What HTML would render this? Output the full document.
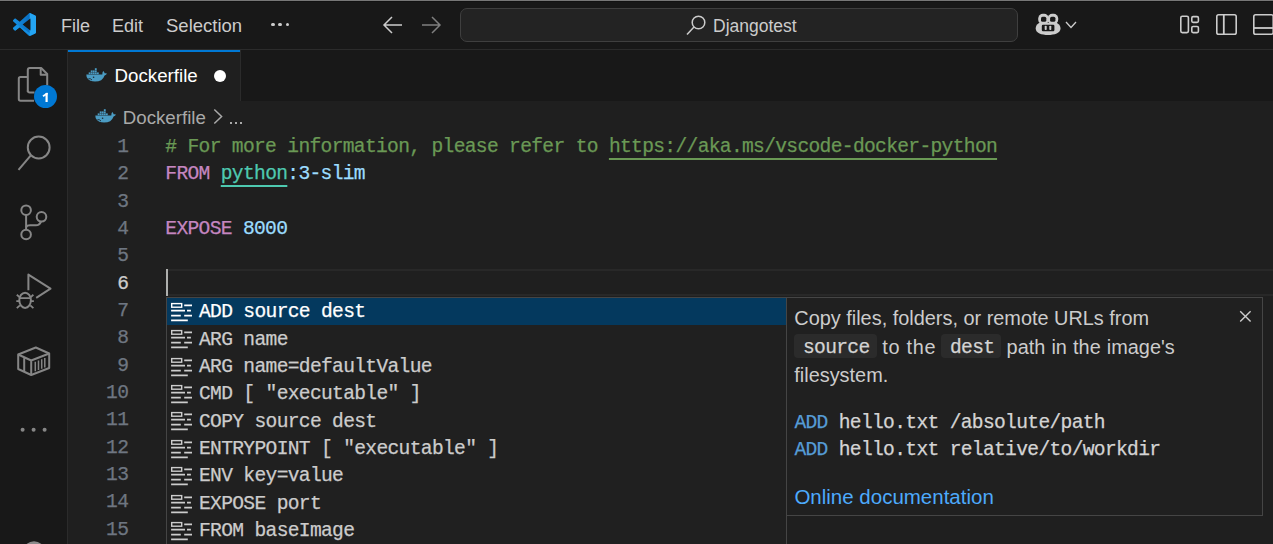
<!DOCTYPE html>
<html><head><meta charset="utf-8">
<style>
*{margin:0;padding:0;box-sizing:border-box}
html,body{width:1273px;height:544px;overflow:hidden;background:#181818}
body{position:relative;font-family:"Liberation Sans",sans-serif;color:#cccccc}
.a{position:absolute}
.t{position:absolute;white-space:pre;line-height:1}
.m{font-family:"Liberation Mono",monospace;letter-spacing:-0.668px;-webkit-text-stroke:0.25px currentColor}
svg{position:absolute;overflow:visible}
</style></head><body>
<!-- top window edge -->
<div class="a" style="left:0;top:0;width:1273px;height:1px;background:#777"></div>
<div class="a" style="left:0;top:1px;width:1273px;height:1px;background:#121212"></div>
<!-- title bar border -->
<div class="a" style="left:0;top:49px;width:1273px;height:1px;background:#2b2b2b"></div>

<!-- vscode logo -->
<svg style="left:13px;top:12.8px" width="23" height="23" viewBox="0 0 100 100">
 <defs>
  <clipPath id="vc"><path d="M96.46 10.8L75.86.9C73.48-.25 70.62.24 68.75 2.1L29.3 38.1 12.12 25.06c-1.6-1.21-3.83-1.11-5.32.24L1.3 30.3c-1.81 1.65-1.81 4.5 0 6.15L16.2 50 1.3 63.55c-1.81 1.65-1.81 4.5 0 6.15l5.5 5c1.490 1.35 3.72 1.45 5.32.24l17.18-13.04 39.45 36c1.87 1.86 4.73 2.35 7.110 1.2l20.6-9.9c2.17-1.04 3.54-3.230 3.54-5.64V16.44c0-2.41-1.37-4.6-3.54-5.64zM75.03 72.7L45.1 50l29.93-22.7v45.4z"/></clipPath>
  <linearGradient id="vg" x1="0" y1="0" x2="1" y2="0"><stop offset="0" stop-color="#168fe2"/><stop offset="0.72" stop-color="#0a6fc2"/></linearGradient>
 </defs>
 <g clip-path="url(#vc)">
  <rect x="0" y="0" width="100" height="100" fill="url(#vg)"/>
  <path d="M0 68 L18 50 L74 100 L0 100 Z" fill="#1693e5"/>
  <path d="M18 50 L74 100 L74 88 Z" fill="#1590e2"/>
  <rect x="72.5" y="0" width="28" height="100" fill="#24a5f3"/>
 </g>
 <path d="M42 50 L75.5 24 V76 Z" fill="#181818"/>
</svg>

<div class="t" style="left:61px;top:17px;font-size:18px">File</div>
<div class="t" style="left:112px;top:17px;font-size:18px">Edit</div>
<div class="t" style="left:166px;top:16.6px;font-size:18.5px">Selection</div>
<!-- more dots -->
<div class="a" style="left:271.1px;top:22.5px;width:3.9px;height:3.9px;border-radius:50%;background:#ccc"></div>
<div class="a" style="left:278.35px;top:22.5px;width:3.9px;height:3.9px;border-radius:50%;background:#ccc"></div>
<div class="a" style="left:285.6px;top:22.5px;width:3.9px;height:3.9px;border-radius:50%;background:#ccc"></div>

<!-- nav arrows -->
<svg style="left:383px;top:16px" width="20" height="18" viewBox="0 0 20 18">
 <path d="M1 9 H19 M9 1 L1 9 L9 17" stroke="#cccccc" stroke-width="1.5" fill="none"/>
</svg>
<svg style="left:421px;top:16px" width="20" height="18" viewBox="0 0 20 18">
 <path d="M1 9 H19 M11 1 L19 9 L11 17" stroke="#7f7f7f" stroke-width="1.5" fill="none"/>
</svg>

<!-- command center -->
<div class="a" style="left:460px;top:8px;width:558px;height:34px;border:1px solid #3f3f3f;border-radius:7px;background:#232323"></div>
<svg style="left:686px;top:15px" width="20" height="20" viewBox="0 0 20 20">
 <circle cx="12.5" cy="7.5" r="6.3" stroke="#cccccc" stroke-width="1.5" fill="none"/>
 <path d="M8 12 L1 19.5" stroke="#cccccc" stroke-width="1.5"/>
</svg>
<div class="t" style="left:713px;top:18px;font-size:17.5px">Djangotest</div>

<!-- copilot -->
<svg style="left:1035px;top:13px" width="26" height="23" viewBox="0 0 26 23">
 <path d="M4 10 C1.5 11.5 0.7 13.5 0.7 15.5 C0.7 20 6.5 22 13 22 C19.5 22 25.5 20 25.5 15.5 C25.5 13.5 24.6 11.5 22 10 Z" fill="#cccccc"/>
 <rect x="3.2" y="0.8" width="10.6" height="10.6" rx="4.6" fill="#cccccc"/>
 <rect x="12.6" y="0.8" width="10.6" height="10.6" rx="4.6" fill="#cccccc"/>
 <rect x="6" y="3.7" width="5.3" height="5.1" rx="1.6" fill="#181818"/>
 <rect x="15.1" y="3.7" width="5.3" height="5.1" rx="1.6" fill="#181818"/>
 <rect x="6.8" y="11.8" width="12.6" height="6.4" rx="1.2" fill="#181818"/>
 <rect x="9.7" y="12.7" width="2" height="4.3" rx="0.8" fill="#cccccc"/>
 <rect x="14.3" y="12.7" width="2" height="4.3" rx="0.8" fill="#cccccc"/>
</svg>
<svg style="left:1065px;top:21px" width="12" height="8" viewBox="0 0 12 8">
 <path d="M1 1 L6 6.5 L11 1" stroke="#cccccc" stroke-width="1.3" fill="none"/>
</svg>

<!-- layout icons -->
<svg style="left:1179px;top:15px" width="21" height="19" viewBox="0 0 21 19">
 <rect x="1.8" y="1.3" width="7.6" height="16.3" rx="1.5" stroke="#cccccc" stroke-width="1.6" fill="none"/>
 <rect x="12.8" y="1.6" width="6.6" height="5.8" rx="1.3" stroke="#cccccc" stroke-width="1.6" fill="none"/>
 <rect x="12.8" y="11.5" width="6.6" height="6.1" rx="1.3" stroke="#cccccc" stroke-width="1.6" fill="none"/>
</svg>
<svg style="left:1215px;top:13px" width="23" height="23" viewBox="0 0 23 23">
 <rect x="1.8" y="1.8" width="19.4" height="19.4" rx="1.8" stroke="#cccccc" stroke-width="1.6" fill="none"/>
 <path d="M8.8 2 V21" stroke="#cccccc" stroke-width="1.8"/>
</svg>
<svg style="left:1252px;top:13px" width="23" height="23" viewBox="0 0 23 23">
 <rect x="1.8" y="1.8" width="19.4" height="19.4" rx="1.8" stroke="#cccccc" stroke-width="1.6" fill="none"/>
 <path d="M2 15 H21" stroke="#cccccc" stroke-width="1.8"/>
</svg>

<!-- activity bar -->
<div class="a" style="left:67px;top:50px;width:1px;height:494px;background:#2b2b2b"></div>


<!-- activity icons -->
<svg style="left:0;top:50px" width="67" height="494" viewBox="0 50 67 494">
 <g stroke="#868686" stroke-width="2" fill="none" stroke-linejoin="round">
  <!-- explorer -->
  <path d="M27.8 77 H20.5 Q18.8 77 18.8 78.7 V99 Q18.8 100.7 20.5 100.7 H34"/>
  <path d="M27.8 92 V70 Q27.8 68 29.8 68 H41.2 L47.2 74 V85.5"/>
  <path d="M40.7 68.5 V74.8 H47"/>
  <path d="M27.8 90.5 Q27.8 92.4 29.8 92.4 H34.5"/>
  <!-- search -->
  <circle cx="38.7" cy="147.5" r="10.9"/>
  <path d="M30.6 155.6 L18.5 169.8"/>
  <!-- source control -->
  <circle cx="26.1" cy="210.2" r="4.8"/>
  <circle cx="41.5" cy="216.8" r="4.8"/>
  <circle cx="26.1" cy="234.5" r="4.8"/>
  <path d="M26.1 215 V229.7"/>
  <path d="M26.1 227 Q27 225.3 30 225.3 H36 Q39.5 225.3 41 221.6"/>
  <!-- run and debug -->
  <path d="M28.4 290.3 V274.6 L50.5 288.7 L36.2 297.8"/>
  <ellipse cx="25.1" cy="300.3" rx="5.8" ry="7.6"/>
  <path d="M19.6 298.2 H30.6 M16.8 294.8 L19.8 297.4 M33.4 294.8 L30.4 297.4 M16.3 301.2 H19.3 M30.9 301.2 H33.9 M16.8 308.2 L19.9 305.4 M33.4 308.2 L30.3 305.4" stroke-width="1.8"/>
  <!-- containers -->
  <path d="M18.2 354.5 L35.8 347.5 L49.2 353.5 V368 L31.2 375 L18.2 369 Z"/>
  <path d="M18.2 354.5 L31.2 360.5 L49.2 353.5 M31.2 360.5 V375 M24.2 357.3 V371.8"/>
  <path d="M35.3 361.8 V371.3 M38.5 360.5 V370 M41.7 359.2 V368.7 M44.8 357.9 V367.4" stroke-width="1.5"/>
 </g>
 <g fill="#868686">
  <circle cx="22.6" cy="429.8" r="2"/><circle cx="33.6" cy="429.8" r="2"/><circle cx="44.6" cy="429.8" r="2"/>
 </g>
 <ellipse cx="34" cy="550" rx="10" ry="8.8" fill="#8a8a8a"/>
</svg>
<!-- badge -->
<div class="a" style="left:34px;top:84.8px;width:23.2px;height:23.2px;border-radius:50%;background:#0078d4"></div>
<svg style="left:34px;top:84px" width="24" height="24" viewBox="0 0 24 24"><path d="M12.6 9 V18" stroke="#fff" stroke-width="2.2"/><path d="M13.6 9.2 L9 12.3" stroke="#fff" stroke-width="1.8"/></svg>

<!-- tabs bar -->
<div class="a" style="left:68px;top:50px;width:172px;height:51px;background:#1f1f1f"></div>
<div class="a" style="left:68px;top:50px;width:172px;height:2px;background:#0078d4"></div>
<div class="a" style="left:240px;top:50px;width:1px;height:51px;background:#2b2b2b"></div>

<!-- editor area -->
<div class="a" style="left:68px;top:101px;width:1205px;height:443px;background:#1f1f1f"></div>


<!-- tab content -->
<svg style="left:86.2px;top:68px" width="22" height="14" viewBox="0 0 22 14"><g fill="#4b9cc3">
 <path d="M0.3 6.4 H16.3 Q16.3 4.5 17.2 3.1 Q18.4 4 18.6 5.2 Q20 5 21 5.6 Q20.2 7.2 18.6 7.4 Q16.5 13.6 9 13.6 Q3.5 13.6 1.6 10.6 Q0.3 8.8 0.3 6.4 Z"/>
 <rect x="2.7" y="4.4" width="1.85" height="1.8"/><rect x="4.75" y="4.4" width="1.85" height="1.8"/><rect x="6.8" y="4.4" width="1.85" height="1.8"/><rect x="8.85" y="4.4" width="1.85" height="1.8"/><rect x="10.9" y="4.4" width="1.85" height="1.8"/>
 <rect x="4.75" y="2.4" width="1.85" height="1.8"/><rect x="6.8" y="2.4" width="1.85" height="1.8"/><rect x="8.85" y="2.4" width="1.85" height="1.8"/>
 <rect x="8.85" y="0.2" width="1.85" height="1.9"/>
</g>
<circle cx="7.6" cy="9.2" r="0.8" fill="#1f2a33"/>
<path d="M2.5 10.6 Q4.8 10.4 6 12" stroke="#1f2a33" stroke-width="0.9" fill="none"/></svg>
<div class="t" style="left:114.6px;top:66.6px;font-size:18.7px;color:#ffffff">Dockerfile</div>
<div class="a" style="left:214px;top:69.6px;width:12.2px;height:12.2px;border-radius:50%;background:#ffffff"></div>

<!-- breadcrumbs -->
<svg style="left:95px;top:109.4px" width="22" height="14" viewBox="0 0 22 14"><g fill="#4b9cc3">
 <path d="M0.3 6.4 H16.3 Q16.3 4.5 17.2 3.1 Q18.4 4 18.6 5.2 Q20 5 21 5.6 Q20.2 7.2 18.6 7.4 Q16.5 13.6 9 13.6 Q3.5 13.6 1.6 10.6 Q0.3 8.8 0.3 6.4 Z"/>
 <rect x="2.7" y="4.4" width="1.85" height="1.8"/><rect x="4.75" y="4.4" width="1.85" height="1.8"/><rect x="6.8" y="4.4" width="1.85" height="1.8"/><rect x="8.85" y="4.4" width="1.85" height="1.8"/><rect x="10.9" y="4.4" width="1.85" height="1.8"/>
 <rect x="4.75" y="2.4" width="1.85" height="1.8"/><rect x="6.8" y="2.4" width="1.85" height="1.8"/><rect x="8.85" y="2.4" width="1.85" height="1.8"/>
 <rect x="8.85" y="0.2" width="1.85" height="1.9"/>
</g>
<circle cx="7.6" cy="9.2" r="0.8" fill="#1f2a33"/>
<path d="M2.5 10.6 Q4.8 10.4 6 12" stroke="#1f2a33" stroke-width="0.9" fill="none"/></svg>
<div class="t" style="left:122.8px;top:109.2px;font-size:18.7px;color:#a9a9a9">Dockerfile</div>
<svg style="left:213px;top:108px" width="10" height="17" viewBox="0 0 10 17"><path d="M1.3 1.5 L8.6 8.5 L1.3 15.5" stroke="#a9a9a9" stroke-width="1.5" fill="none"/></svg>
<div class="a" style="left:230px;top:122px;width:2.2px;height:2.2px;background:#a9a9a9"></div>
<div class="a" style="left:235px;top:122px;width:2.2px;height:2.2px;background:#a9a9a9"></div>
<div class="a" style="left:240px;top:122px;width:2.2px;height:2.2px;background:#a9a9a9"></div>


<!-- editor -->
<div class="a" style="left:166px;top:268.70px;width:1107px;height:27.3px;border-top:2px solid #282828;border-bottom:2px solid #282828"></div>
<div class="a" style="left:166px;top:268.50px;width:2px;height:27.4px;background:#aeafad"></div>
<div class="t m" style="left:68px;width:60.3px;text-align:right;top:137.79px;font-size:19.6px;color:#6e7681">1</div>
<div class="t m" style="left:68px;width:60.3px;text-align:right;top:165.15px;font-size:19.6px;color:#6e7681">2</div>
<div class="t m" style="left:68px;width:60.3px;text-align:right;top:192.51px;font-size:19.6px;color:#6e7681">3</div>
<div class="t m" style="left:68px;width:60.3px;text-align:right;top:219.87px;font-size:19.6px;color:#6e7681">4</div>
<div class="t m" style="left:68px;width:60.3px;text-align:right;top:247.23px;font-size:19.6px;color:#6e7681">5</div>
<div class="t m" style="left:68px;width:60.3px;text-align:right;top:274.59px;font-size:19.6px;color:#cccccc">6</div>
<div class="t m" style="left:68px;width:60.3px;text-align:right;top:301.95px;font-size:19.6px;color:#6e7681">7</div>
<div class="t m" style="left:68px;width:60.3px;text-align:right;top:329.31px;font-size:19.6px;color:#6e7681">8</div>
<div class="t m" style="left:68px;width:60.3px;text-align:right;top:356.67px;font-size:19.6px;color:#6e7681">9</div>
<div class="t m" style="left:68px;width:60.3px;text-align:right;top:384.03px;font-size:19.6px;color:#6e7681">10</div>
<div class="t m" style="left:68px;width:60.3px;text-align:right;top:411.39px;font-size:19.6px;color:#6e7681">11</div>
<div class="t m" style="left:68px;width:60.3px;text-align:right;top:438.75px;font-size:19.6px;color:#6e7681">12</div>
<div class="t m" style="left:68px;width:60.3px;text-align:right;top:466.11px;font-size:19.6px;color:#6e7681">13</div>
<div class="t m" style="left:68px;width:60.3px;text-align:right;top:493.47px;font-size:19.6px;color:#6e7681">14</div>
<div class="t m" style="left:68px;width:60.3px;text-align:right;top:520.83px;font-size:19.6px;color:#6e7681">15</div>
<div class="t m" style="left:165.3px;top:137.79px;font-size:19.6px"><span style="color:#6a9955"># For more information, please refer to <span style="text-decoration:underline;text-underline-offset:6px;text-decoration-thickness:2px">https://aka.ms/vscode-docker-python</span></span></div>
<div class="t m" style="left:165.3px;top:165.15px;font-size:19.6px"><span style="color:#c586c0">FROM</span> <span style="color:#4ec9b0;text-decoration:underline;text-underline-offset:6px;text-decoration-thickness:2px">python</span><span style="color:#9cdcfe">:3-slim</span></div>
<div class="t m" style="left:165.3px;top:219.87px;font-size:19.6px"><span style="color:#c586c0">EXPOSE</span> <span style="color:#9cdcfe">8000</span></div>

<!-- suggest -->
<div class="a" style="left:166px;top:297px;width:621px;height:260px;border:1px solid #454545;background:#202020"></div>
<div class="a" style="left:167px;top:298px;width:619px;height:27px;background:#04395e"></div>
<svg style="left:168px;top:298.00px" width="30" height="27" viewBox="0 0 30 27"><g fill="none" stroke="#ffffff" stroke-width="1.4"><rect x="3.7" y="5.6" width="10" height="3.6"/></g><g stroke="#ffffff" stroke-width="1.7"><path d="M16.2 7.3 H24 M3.1 12.6 H17 M19 12.6 H22.9 M3.1 17.6 H12.8 M16.2 17.6 H24 M3.1 22.4 H19.8"/></g></svg>
<div class="t m" style="left:199px;top:303.19px;font-size:19.6px;color:#ffffff">ADD source dest</div>
<svg style="left:168px;top:325.36px" width="30" height="27" viewBox="0 0 30 27"><g fill="none" stroke="#cccccc" stroke-width="1.4"><rect x="3.7" y="5.6" width="10" height="3.6"/></g><g stroke="#cccccc" stroke-width="1.7"><path d="M16.2 7.3 H24 M3.1 12.6 H17 M19 12.6 H22.9 M3.1 17.6 H12.8 M16.2 17.6 H24 M3.1 22.4 H19.8"/></g></svg>
<div class="t m" style="left:199px;top:330.55px;font-size:19.6px;color:#cccccc">ARG name</div>
<svg style="left:168px;top:352.72px" width="30" height="27" viewBox="0 0 30 27"><g fill="none" stroke="#cccccc" stroke-width="1.4"><rect x="3.7" y="5.6" width="10" height="3.6"/></g><g stroke="#cccccc" stroke-width="1.7"><path d="M16.2 7.3 H24 M3.1 12.6 H17 M19 12.6 H22.9 M3.1 17.6 H12.8 M16.2 17.6 H24 M3.1 22.4 H19.8"/></g></svg>
<div class="t m" style="left:199px;top:357.91px;font-size:19.6px;color:#cccccc">ARG name=defaultValue</div>
<svg style="left:168px;top:380.08px" width="30" height="27" viewBox="0 0 30 27"><g fill="none" stroke="#cccccc" stroke-width="1.4"><rect x="3.7" y="5.6" width="10" height="3.6"/></g><g stroke="#cccccc" stroke-width="1.7"><path d="M16.2 7.3 H24 M3.1 12.6 H17 M19 12.6 H22.9 M3.1 17.6 H12.8 M16.2 17.6 H24 M3.1 22.4 H19.8"/></g></svg>
<div class="t m" style="left:199px;top:385.27px;font-size:19.6px;color:#cccccc">CMD [ "executable" ]</div>
<svg style="left:168px;top:407.44px" width="30" height="27" viewBox="0 0 30 27"><g fill="none" stroke="#cccccc" stroke-width="1.4"><rect x="3.7" y="5.6" width="10" height="3.6"/></g><g stroke="#cccccc" stroke-width="1.7"><path d="M16.2 7.3 H24 M3.1 12.6 H17 M19 12.6 H22.9 M3.1 17.6 H12.8 M16.2 17.6 H24 M3.1 22.4 H19.8"/></g></svg>
<div class="t m" style="left:199px;top:412.63px;font-size:19.6px;color:#cccccc">COPY source dest</div>
<svg style="left:168px;top:434.80px" width="30" height="27" viewBox="0 0 30 27"><g fill="none" stroke="#cccccc" stroke-width="1.4"><rect x="3.7" y="5.6" width="10" height="3.6"/></g><g stroke="#cccccc" stroke-width="1.7"><path d="M16.2 7.3 H24 M3.1 12.6 H17 M19 12.6 H22.9 M3.1 17.6 H12.8 M16.2 17.6 H24 M3.1 22.4 H19.8"/></g></svg>
<div class="t m" style="left:199px;top:439.99px;font-size:19.6px;color:#cccccc">ENTRYPOINT [ "executable" ]</div>
<svg style="left:168px;top:462.16px" width="30" height="27" viewBox="0 0 30 27"><g fill="none" stroke="#cccccc" stroke-width="1.4"><rect x="3.7" y="5.6" width="10" height="3.6"/></g><g stroke="#cccccc" stroke-width="1.7"><path d="M16.2 7.3 H24 M3.1 12.6 H17 M19 12.6 H22.9 M3.1 17.6 H12.8 M16.2 17.6 H24 M3.1 22.4 H19.8"/></g></svg>
<div class="t m" style="left:199px;top:467.35px;font-size:19.6px;color:#cccccc">ENV key=value</div>
<svg style="left:168px;top:489.52px" width="30" height="27" viewBox="0 0 30 27"><g fill="none" stroke="#cccccc" stroke-width="1.4"><rect x="3.7" y="5.6" width="10" height="3.6"/></g><g stroke="#cccccc" stroke-width="1.7"><path d="M16.2 7.3 H24 M3.1 12.6 H17 M19 12.6 H22.9 M3.1 17.6 H12.8 M16.2 17.6 H24 M3.1 22.4 H19.8"/></g></svg>
<div class="t m" style="left:199px;top:494.71px;font-size:19.6px;color:#cccccc">EXPOSE port</div>
<svg style="left:168px;top:516.88px" width="30" height="27" viewBox="0 0 30 27"><g fill="none" stroke="#cccccc" stroke-width="1.4"><rect x="3.7" y="5.6" width="10" height="3.6"/></g><g stroke="#cccccc" stroke-width="1.7"><path d="M16.2 7.3 H24 M3.1 12.6 H17 M19 12.6 H22.9 M3.1 17.6 H12.8 M16.2 17.6 H24 M3.1 22.4 H19.8"/></g></svg>
<div class="t m" style="left:199px;top:522.07px;font-size:19.6px;color:#cccccc">FROM baseImage</div>
<div class="a" style="left:786px;top:297px;width:477px;height:219px;border:1px solid #454545;background:#202020"></div>
<svg style="left:1239px;top:310px" width="13" height="13" viewBox="0 0 13 13"><path d="M1.2 1.2 L11.6 11.6 M11.6 1.2 L1.2 11.6" stroke="#cccccc" stroke-width="1.4"/></svg>
<div class="t" style="left:794.3px;top:308.5px;font-size:19.9px">Copy files, folders, or remote URLs from</div>
<div class="a" style="left:794.3px;top:334px;width:82.7px;height:24px;border-radius:4px;background:#2b2b2b"></div>
<div class="a" style="left:941.4px;top:334px;width:59.3px;height:24px;border-radius:4px;background:#2b2b2b"></div>
<div class="t m" style="left:803px;top:339.3px;font-size:19.6px;color:#d4d4d4">source</div>
<div class="t" style="left:882.3px;top:337.6px;font-size:19.9px;letter-spacing:0.7px">to the</div>
<div class="t m" style="left:950px;top:339.3px;font-size:19.6px;color:#d4d4d4">dest</div>
<div class="t" style="left:1006.6px;top:337.6px;font-size:19.9px;word-spacing:0.6px">path in the image's</div>
<div class="t" style="left:794.3px;top:365.9px;font-size:19.9px">filesystem.</div>
<div class="t m" style="left:794.4px;top:413.99px;font-size:19.6px;color:#d4d4d4"><span style="color:#569cd6">ADD</span> hello.txt /absolute/path</div>
<div class="t m" style="left:794.4px;top:440.99px;font-size:19.6px;color:#d4d4d4"><span style="color:#569cd6">ADD</span> hello.txt relative/to/workdir</div>
<div class="t" style="left:794.4px;top:486.50px;font-size:20.5px;color:#4daafc">Online documentation</div>
</body></html>
